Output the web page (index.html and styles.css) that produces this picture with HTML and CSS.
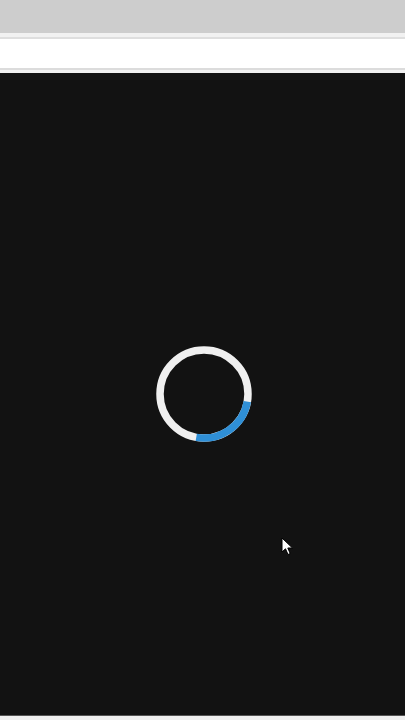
FILE: index.html
```html
<!DOCTYPE html>
<html>
<head>
<meta charset="utf-8">
<link rel="stylesheet" href="styles.css">
</head>
<body>
<div class="page">
  <div class="topbar"></div>
  <div class="addr">
    <div class="addr-top"></div>
    <div class="addr-field"></div>
    <div class="addr-bottom"></div>
  </div>
  <div class="stage">
    <svg class="spinner" width="100" height="100" viewBox="0 0 100 100">
      <circle cx="50" cy="50" r="44" fill="none" stroke="#efefef" stroke-width="7.5"/>
      <circle cx="50" cy="50" r="44" fill="none" stroke="#2f8fd6" stroke-width="7.5"
        stroke-dasharray="69.1 207.4" transform="rotate(10 50 50)"/>
    </svg>
    <svg class="cursor" width="14" height="20" viewBox="0 0 14 20">
      <path d="M1 1 L1 15 L4.5 11.8 L7 17.5 L9.2 16.5 L6.8 11 L11.5 11 Z" fill="#ffffff" stroke="#000" stroke-width="1" stroke-linejoin="round"/>
    </svg>
  </div>
  <div class="bottom"></div>
</div>
</body>
</html>
```
FILE: styles.css
```css
html, body {
  margin: 0;
  padding: 0;
  background: #f2f2f2;
  font-family: "Liberation Sans", Arial, sans-serif;
}
.page {
  width: 405px;
  height: 720px;
  display: flex;
  flex-direction: column;
  overflow: hidden;
}
.topbar {
  height: 33px;
  background: #cdcdcd;
  flex: none;
}
.addr {
  flex: none;
  display: flex;
  flex-direction: column;
}
.addr-top {
  height: 4px;
  background: #f1f1f1;
  border-bottom: 2px solid #dedede;
}
.addr-field {
  height: 29px;
  background: #ffffff;
}
.addr-bottom {
  height: 3px;
  background: #f1f1f1;
  border-top: 2px solid #dcdcdc;
}
.stage {
  flex: 1;
  background: #121212;
  position: relative;
  display: flex;
  align-items: center;
  justify-content: center;
}
.spinner {
  display: block;
  margin-left: 2px;
  margin-top: 0;
}
.cursor {
  position: absolute;
  left: 281px;
  top: 464px;
}
.bottom {
  flex: none;
  height: 4px;
  background: #f0f0f0;
  border-top: 1px solid #555555;
}
```
